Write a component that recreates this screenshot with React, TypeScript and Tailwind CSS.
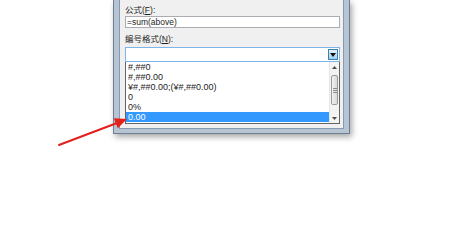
const rows = ["#,##0", "#,##0.00", "¥#,##0.00;(¥#,##0.00)", "0", "0%", "0.00"];
const SELECTED = 5;

const font = "font-['Liberation_Sans','Noto_Sans_CJK_SC',sans-serif]";

function Label({ text, hotkey }: { text: string; hotkey: string }) {
  return (
    <div className="h-[12px] text-[8.5px] leading-[12px] text-[#1e1e1e]">
      {text}(<span className="underline">{hotkey}</span>):
    </div>
  );
}

function ScrollBar() {
  return (
    <div className="w-[10px] shrink-0 flex flex-col bg-[#f3f3f3] border-l border-[#e6e6e6]">
      {/* up */}
      <div className="h-[10px] flex items-center justify-center">
        <svg width="5" height="3" viewBox="0 0 5 3">
          <path d="M0 3 L2.5 0 L5 3 Z" fill="#4d4d4d" />
        </svg>
      </div>
      {/* thumb */}
      <div className="mt-[3px] h-[30px] mx-[1px] rounded-[2px] border border-[#9b9b9b] bg-gradient-to-r from-[#f2f2f2] to-[#d9d9d9] flex flex-col items-center justify-center gap-[1px]">
        <div className="w-[4px] h-px bg-[#8d8d8d]" />
        <div className="w-[4px] h-px bg-[#8d8d8d]" />
        <div className="w-[4px] h-px bg-[#8d8d8d]" />
      </div>
      <div className="flex-1" />
      {/* down */}
      <div className="h-[10px] flex items-center justify-center">
        <svg width="5" height="3" viewBox="0 0 5 3">
          <path d="M0 0 L2.5 3 L5 0 Z" fill="#4d4d4d" />
        </svg>
      </div>
    </div>
  );
}

export default function App() {
  return (
    <div className={`relative w-[474px] h-[236px] bg-white overflow-hidden ${font}`}>
      {/* dialog window */}
      <div className="ml-[113px] w-[237px] flex flex-col border-x border-b border-[#6f7f92] bg-[#b7c4d3] px-[5px] pb-[4px] shadow-[2px_3px_6px_rgba(0,0,0,0.35)]">
        <div className="flex flex-col bg-[#f0f0f0] border-x border-b border-[#8799ad] pl-[5px] pr-[3px] pt-[4px] pb-[4px]">
          <Label text="公式" hotkey="F" />
          <div className="h-[12px] border border-[#abadb3] bg-white px-[1px] text-[8.5px] leading-[10px] text-[#1e1e1e]">
            =sum(above)
          </div>
          <div className="mt-[5px]">
            <Label text="编号格式" hotkey="N" />
          </div>
          {/* combo box */}
          <div className="mt-[2px] h-[15px] border border-[#7eb4ea] bg-white flex justify-end items-stretch p-px">
            <div className="w-[10px] border border-[#3c7fb1] bg-gradient-to-b from-[#e3f1fb] to-[#9fd0ef] flex items-center justify-center">
              <svg width="6" height="4" viewBox="0 0 6 4">
                <path d="M0 0 L6 0 L3 4 Z" fill="#111" />
              </svg>
            </div>
          </div>
          {/* dropdown list */}
          <div className="h-[62px] border border-[#646464] border-t-0 bg-white flex">
            <div className="flex-1 flex flex-col">
              {rows.map((r, i) => (
                <div
                  key={r}
                  className={
                    i === SELECTED
                      ? "h-[10px] pl-[2px] text-[9px] leading-[10px] bg-[#3399ff] text-white"
                      : "h-[10px] pl-[2px] text-[9px] leading-[10px] text-[#1e1e1e]"
                  }
                >
                  {r}
                </div>
              ))}
            </div>
            <ScrollBar />
          </div>
        </div>
      </div>

      {/* red annotation arrow */}
      <svg className="absolute left-0 top-0 pointer-events-none" width="474" height="236" viewBox="0 0 474 236">
        <line x1="59" y1="145" x2="117" y2="123" stroke="#e3201b" strokeWidth="2" strokeLinecap="round" />
        <polygon points="127,119 117.8,128.3 113.8,118.2" fill="#e3201b" />
      </svg>
    </div>
  );
}
